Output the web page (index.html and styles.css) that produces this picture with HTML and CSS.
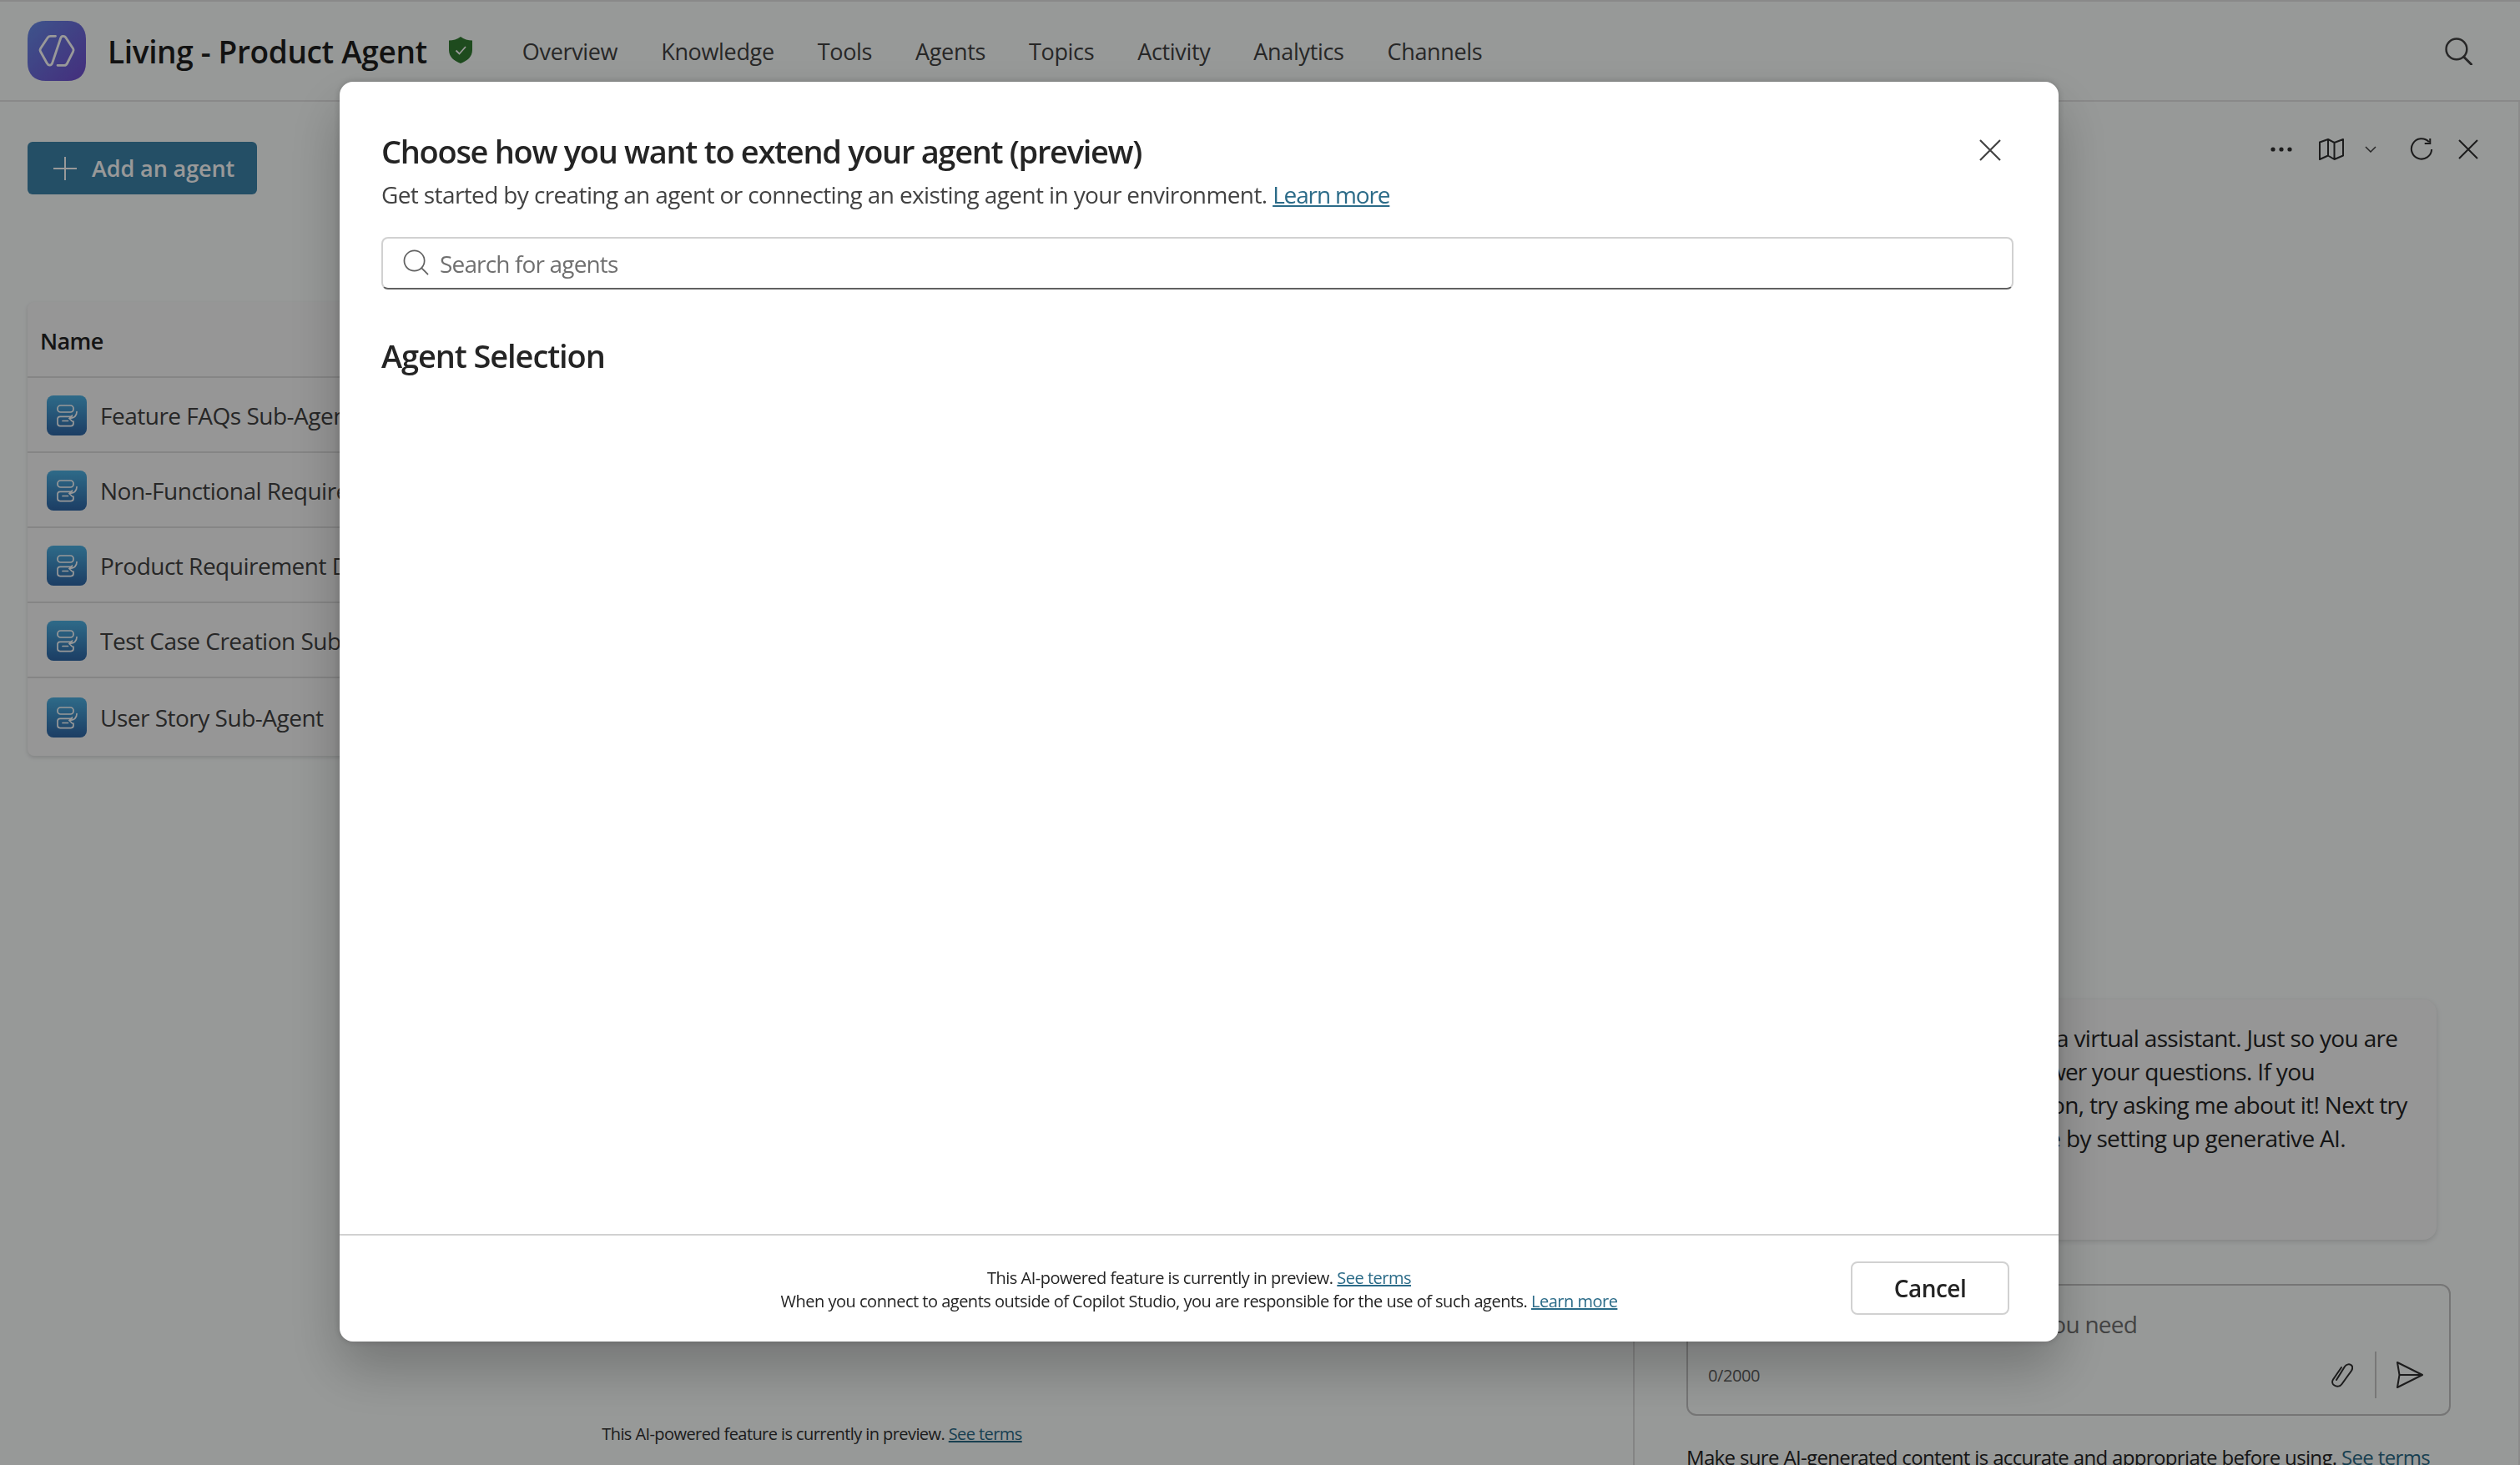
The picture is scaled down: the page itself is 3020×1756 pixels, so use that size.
FILE: index.html
```html
<!DOCTYPE html>
<html lang="en">
<head>
<meta charset="utf-8">
<title>Living - Product Agent</title>
<link rel="stylesheet" href="styles.css">
</head>
<body>
<div class="app">
  <header class="topbar">
    <svg class="logo" viewBox="0 0 70 72" aria-hidden="true">
      <defs><linearGradient id="lg" x1="0" y1="0" x2="1" y2="1"><stop offset="0" stop-color="#678ce9"/><stop offset="1" stop-color="#724dd0"/></linearGradient></defs>
      <path d="M22 0H48C62 0 70 8 70 22V50C70 64 62 72 48 72H22C8 72 0 64 0 50V22C0 8 8 0 22 0Z" fill="url(#lg)"/>
      <path d="M33.5 18.3H27.5Q25.3 18.3 24.2 20L15.5 33.2Q14.4 35 15.5 36.8L23.3 50.8C25 54 28.6 53.6 29.6 50.8L39.6 21C40.4 18 44 17.5 46 20.2L54.6 33.2Q55.6 35 54.6 36.8L47.5 51Q46.4 53.3 44 53.3H36" fill="none" stroke="#fff" stroke-width="2.8" stroke-linecap="round" stroke-linejoin="round"/>
    </svg>
    <span class="agent-name">Living - Product Agent</span>
    <svg class="shield" viewBox="0 0 28 32" aria-hidden="true">
      <path d="M14 0C18 3 23 4.500 28 4.500V16C28 24 22 29 14 32C6 29 0 24 0 16V4.500C5 4.500 10 3 14 0Z" fill="#327d32"/>
      <path d="M8.500 16.500L12.500 20.500L20 12" fill="none" stroke="#fff" stroke-width="1.800"/>
    </svg>
    <nav class="nav">
      <a>Overview</a><a>Knowledge</a><a>Tools</a><a>Agents</a><a>Topics</a><a>Activity</a><a>Analytics</a><a>Channels</a>
    </nav>
    <svg class="top-search" viewBox="0 0 32 32" aria-hidden="true">
      <circle cx="13.500" cy="13.500" r="12" fill="none" stroke="#424242" stroke-width="2.400"/>
      <path d="M22 22.500L31 31.500" stroke="#424242" stroke-width="2.800" stroke-linecap="round"/>
    </svg>
  </header>
  <main class="workspace">
    <section class="agents-pane">
      <button class="add-btn">
        <svg class="add-icon" viewBox="0 0 30 30" aria-hidden="true"><path d="M15 1V29M1 15H29" stroke="#fff" stroke-width="2"/></svg>
        <span>Add an agent</span>
      </button>
      <div class="agents-card">
        <div class="card-head">Name</div>
        <div class="agent-row"><svg class="agent-icon"><use href="#ag"/></svg><span>Feature FAQs Sub-Agent</span></div>
        <div class="agent-row"><svg class="agent-icon"><use href="#ag"/></svg><span>Non-Functional Requirements Sub-Agent</span></div>
        <div class="agent-row"><svg class="agent-icon"><use href="#ag"/></svg><span>Product Requirement Document Sub-Agent</span></div>
        <div class="agent-row"><svg class="agent-icon"><use href="#ag"/></svg><span>Test Case Creation Sub-Agent</span></div>
        <div class="agent-row last"><svg class="agent-icon"><use href="#ag"/></svg><span>User Story Sub-Agent</span></div>
      </div>
      <p class="pane-note">This AI-powered feature is currently in preview. <a class="link">See terms</a></p>
    </section>
    <aside class="test-pane">
      <div class="test-tools">
        <svg class="tool dots" viewBox="0 0 26 6" aria-hidden="true"><circle cx="3" cy="3" r="2.600"/><circle cx="13" cy="3" r="2.600"/><circle cx="23" cy="3" r="2.600"/></svg>
        <svg class="tool map" viewBox="0 0 30 26" aria-hidden="true"><path d="M1 4.500L11 1L18.500 5L29 1V20.500L18.500 25L11 20.500L1 25ZM11 1V20.500M18.500 5V25" fill="none" stroke="#2f2f2f" stroke-width="2" stroke-linejoin="round"/></svg>
        <svg class="tool chev" viewBox="0 0 14 8" aria-hidden="true"><path d="M1 1L7 7L13 1" fill="none" stroke="#424242" stroke-width="1.500"/></svg>
        <svg class="tool refresh" viewBox="0 0 30 30" aria-hidden="true"><path d="M24.500 5.500A13 13 0 1 0 28 15M26 1V7.500H19" fill="none" stroke="#2f2f2f" stroke-width="2.200"/></svg>
        <svg class="tool close" viewBox="0 0 24 24" aria-hidden="true"><path d="M1 1L23 23M23 1L1 23" stroke="#2f2f2f" stroke-width="2"/></svg>
      </div>
      <div class="bubble">
        <span class="bubble-line">Hello, I'm Living - Product Agent, a virtual assistant. Just so you are</span>
        <span class="bubble-line"><span class="tight">aware, I sometimes use AI to answer</span> your questions. If you</span>
        <span class="bubble-line">provided a website during creation, try asking me about it! Next try</span>
        <span class="bubble-line">giving me some more knowledge by setting up generative AI.</span>
      </div>
      <div class="composer">
        <div class="composer-input">Ask a question or describe what you need</div>
        <div class="composer-foot">
          <span class="counter">0/2000</span>
          <svg class="clip" viewBox="0 0 26 30" aria-hidden="true"><path d="M6 21L16 5C18 2 22 1.500 24 3.500C25.500 5 25.500 7.500 24 10L12.500 26C10.500 29 6.500 29.500 3.500 27.500C1 26 .5 23 2 20.500L12 6" fill="none" stroke="#2f2f2f" stroke-width="2" stroke-linecap="round"/></svg>
          <span class="composer-sep"></span>
          <svg class="send" viewBox="0 0 32 32" aria-hidden="true"><path d="M1 1L31 16L1 31L3.500 16ZM3.500 16H31" fill="none" stroke="#2f2f2f" stroke-width="2" stroke-linejoin="round"/></svg>
        </div>
      </div>
      <p class="disclaimer">Make sure AI-generated content is accurate and appropriate before using. <a class="link">See terms</a></p>
    </aside>
  </main>
</div>

<svg class="defs" aria-hidden="true">
  <defs>
    <linearGradient id="agg" x1="0" y1="0" x2="0" y2="1"><stop offset="0" stop-color="#4eb2e4"/><stop offset="1" stop-color="#2f67a7"/></linearGradient>
    <symbol id="ag" viewBox="0 0 48 48">
      <rect width="48" height="48" rx="8" fill="url(#agg)"/>
      <rect x="13" y="12" width="19" height="8" rx="3.500" fill="none" stroke="#fff" stroke-width="1.700"/>
      <path d="M30 25.300H16Q13 25.300 13 28.300V33.600Q13 36.600 16 36.600H29Q32 36.600 32 33.600V31M19 30.500H25.500" fill="none" stroke="#fff" stroke-width="1.700" stroke-linecap="round"/>
      <path d="M36 19.500C36 24 33 27 27.500 27.500M30.500 24L27 27.500L30.500 31" fill="none" stroke="#fff" stroke-width="1.700" stroke-linecap="round"/>
    </symbol>
  </defs>
</svg>

<div class="backdrop">
  <div class="dialog" role="dialog" aria-modal="true">
    <div class="dialog-body">
      <div class="dialog-head">
        <h1 class="dialog-title">Choose how you want to extend your agent (preview)</h1>
        <svg class="dialog-close" viewBox="0 0 26 26" aria-hidden="true"><path d="M1 1L25 25M25 1L1 25" stroke="#424242" stroke-width="2.200"/></svg>
      </div>
      <p class="dialog-sub">Get started by creating an agent or connecting an existing agent in your environment. <a class="link">Learn more</a></p>
      <div class="search-field">
        <svg class="search-icon" viewBox="0 0 32 32" aria-hidden="true"><circle cx="14" cy="14" r="12.500" fill="none" stroke="#616161" stroke-width="1.800"/><path d="M23 23L31 31" stroke="#616161" stroke-width="1.800"/></svg>
        <span class="search-ph">Search for agents</span>
      </div>
      <h2 class="section-title">Agent Selection</h2>
    </div>
    <div class="dialog-foot">
      <div class="foot-note">
        <p>This AI-powered feature is currently in preview. <a class="link">See terms</a></p>
        <p>When you connect to agents outside of Copilot Studio, you are responsible for the use of such agents. <a class="link">Learn more</a></p>
      </div>
      <button class="cancel-btn">Cancel</button>
    </div>
  </div>
</div>
</body>
</html>
```

FILE: styles.css
```css
* { box-sizing: border-box; }
html, body { margin: 0; height: 100%; overflow: hidden; }
body {
  font-family: "Open Sans", "Noto Sans", "Liberation Sans", sans-serif;
  color: #242424;
  background: #fcfffe;
}
p, h1, h2 { margin: 0; }
.defs { width: 0; height: 0; display: block; }
.link { color: #2b6b88; text-decoration: underline; }

.app { height: 1756px; display: flex; flex-direction: column; border-top: 2px solid #e4e4e4; }

.topbar {
  height: 120px; flex: none;
  display: flex; align-items: center;
  padding: 0 0 0 33px;
  border-bottom: 2px solid #e4e4e4;
}
.logo { width: 70px; height: 72px; margin-top: -1px; flex: none; }
.agent-name { margin-left: 26px; font-size: 37px; font-weight: 600; letter-spacing: -0.35px; color: #1f1f1f; white-space: nowrap; }
.shield { width: 28px; height: 32px; margin-left: 26px; margin-top: -2px; flex: none; }
.nav { display: flex; gap: 52px; margin-left: 60px; font-size: 27px; color: #424242; letter-spacing: -0.34px; white-space: nowrap; }
.top-search { width: 33px; height: 33px; margin-left: auto; margin-right: 57px; flex: none; }

.workspace { flex: 1; display: flex; min-height: 0; }

.agents-pane { width: 1959px; flex: none; border-right: 2px solid #dcdcdc; padding: 48px 0 0 33px; display: flex; flex-direction: column; overflow: hidden; }
.add-btn {
  width: 275px; height: 63px; flex: none;
  display: flex; align-items: center; gap: 17px;
  padding: 0 0 0 30px; border: 0; border-radius: 6px;
  background: #3c84aa; color: #fff;
  font: 600 27px "Open Sans", sans-serif; letter-spacing: -0.1px;
}
.add-icon { width: 30px; height: 30px; flex: none; }
.agents-card {
  width: 1850px; margin-top: 129px; flex: none;
  background: #fafafa; border-radius: 8px;
  box-shadow: 0 2px 5px rgba(0,0,0,.14);
}
.card-head { height: 91px; display: flex; align-items: center; padding: 3px 0 0 15px; font-size: 27px; font-weight: 600; border-bottom: 2px solid #dedede; letter-spacing: -0.6px; }
.agent-row { height: 90px; display: flex; align-items: center; gap: 16px; padding: 2px 0 0 23px; font-size: 28px; color: #424242; border-bottom: 2px solid #dedede; letter-spacing: -0.5px; }
.agent-row.last { height: 93px; padding-top: 0; border-bottom: 0; }
.agent-icon { width: 48px; height: 48px; flex: none; }
.pane-note { margin-top: auto; margin-bottom: 24px; font-size: 20px; text-align: center; padding-right: 44px; letter-spacing: -0.58px; color: #303030; }

.test-pane { flex: 1; min-width: 0; padding: 30px 0 0 62px; display: flex; flex-direction: column; overflow: hidden; border-right: 2px solid #e8e8e8; }
.test-tools { height: 54px; flex: none; display: flex; align-items: center; padding-right: 0; }
.tool { flex: none; display: block; }
.dots { width: 26px; height: 6px; margin-left: 700px; fill: #2f2f2f; }
.map { width: 30px; height: 26px; margin-left: 32px; }
.chev { width: 14px; height: 8px; margin-left: 25px; }
.refresh { width: 30px; height: 28px; margin-left: 39px; }
.close { width: 24px; height: 24px; margin-left: 29px; }

.bubble {
  width: 899px; height: 288px; margin-top: 992px; flex: none;
  padding: 26px 0 0 38px;
  background: #fafafa; border-radius: 16px;
  box-shadow: 0 2px 6px rgba(0,0,0,.14);
  font-size: 28px; line-height: 40px; color: #242424; letter-spacing: -0.66px;
}
.bubble-line { display: block; white-space: nowrap; }
.tight { letter-spacing: -1px; }
.composer {
  width: 916px; height: 158px; margin-top: 53px; flex: none;
  border: 2px solid #c4c4c4; border-radius: 12px;
  padding: 26px 26px 0 24px;
  display: flex; flex-direction: column;
}
.composer-input { font-size: 28px; line-height: 40px; color: #707070; letter-spacing: -0.75px; white-space: nowrap; }
.composer-foot { display: flex; align-items: center; margin-top: 13px; height: 56px; }
.counter { font-size: 20px; color: #616161; letter-spacing: -0.4px; margin-right: auto; }
.clip { width: 26px; height: 30px; flex: none; }
.composer-sep { width: 2px; height: 56px; background: #c8c8c8; margin: 0 24px 0 26px; flex: none; }
.send { width: 32px; height: 32px; margin-right: 5px; flex: none; }
.disclaimer { margin-top: 33px; font-size: 24px; line-height: 34px; white-space: nowrap; letter-spacing: -0.65px; color: #242424; }

.backdrop {
  position: fixed; inset: 0;
  background: rgba(0,0,0,.4);
  padding: 98px 553px 148px 407px;
  display: flex;
}
.dialog {
  flex: 1; background: #fff; border-radius: 16px;
  box-shadow: 0 32px 64px rgba(0,0,0,.24), 0 0 8px rgba(0,0,0,.2);
  display: flex; flex-direction: column; overflow: hidden;
}
.dialog-body { flex: 1; padding: 0 54px 0 50px; }
.dialog-head { display: flex; align-items: center; justify-content: space-between; height: 60px; margin-top: 53px; padding-right: 15px; }
.dialog-title { font-size: 38px; font-weight: 600; color: #242424; letter-spacing: -1.3px; white-space: nowrap; }
.dialog-close { width: 26px; height: 26px; margin-top: -2px; flex: none; }
.dialog-sub { margin-top: 2px; font-size: 28px; line-height: 40px; color: #424242; letter-spacing: -0.62px; white-space: nowrap; }
.dialog-sub .link { letter-spacing: -1.15px; }
.search-field {
  height: 63px; margin-top: 31px;
  display: flex; align-items: center; gap: 13px;
  padding-left: 24px;
  border: 2px solid #d1d1d1; border-bottom-color: #616161; border-radius: 8px;
}
.search-icon { width: 31px; height: 31px; margin-top: -2px; flex: none; }
.search-ph { font-size: 28px; color: #707070; letter-spacing: -0.85px; }
.section-title { margin-top: 52px; font-size: 38px; font-weight: 600; line-height: 54px; color: #242424; letter-spacing: -1.1px; }
.dialog-foot {
  height: 129px; flex: none;
  display: flex; align-items: center;
  padding: 0 59px 0 0;
  border-top: 2px solid #d1d1d1;
}
.foot-note { flex: 1; padding-left: 249px; font-size: 20px; line-height: 28px; text-align: center; color: #242424; letter-spacing: -0.5px; margin-top: 3px; white-space: nowrap; }
.cancel-btn {
  width: 190px; height: 64px; flex: none; margin-top: -2px;
  background: #fff; border: 2px solid #d1d1d1; border-radius: 8px;
  font: 600 28px "Open Sans", sans-serif; color: #242424; letter-spacing: -0.5px;
}
```
